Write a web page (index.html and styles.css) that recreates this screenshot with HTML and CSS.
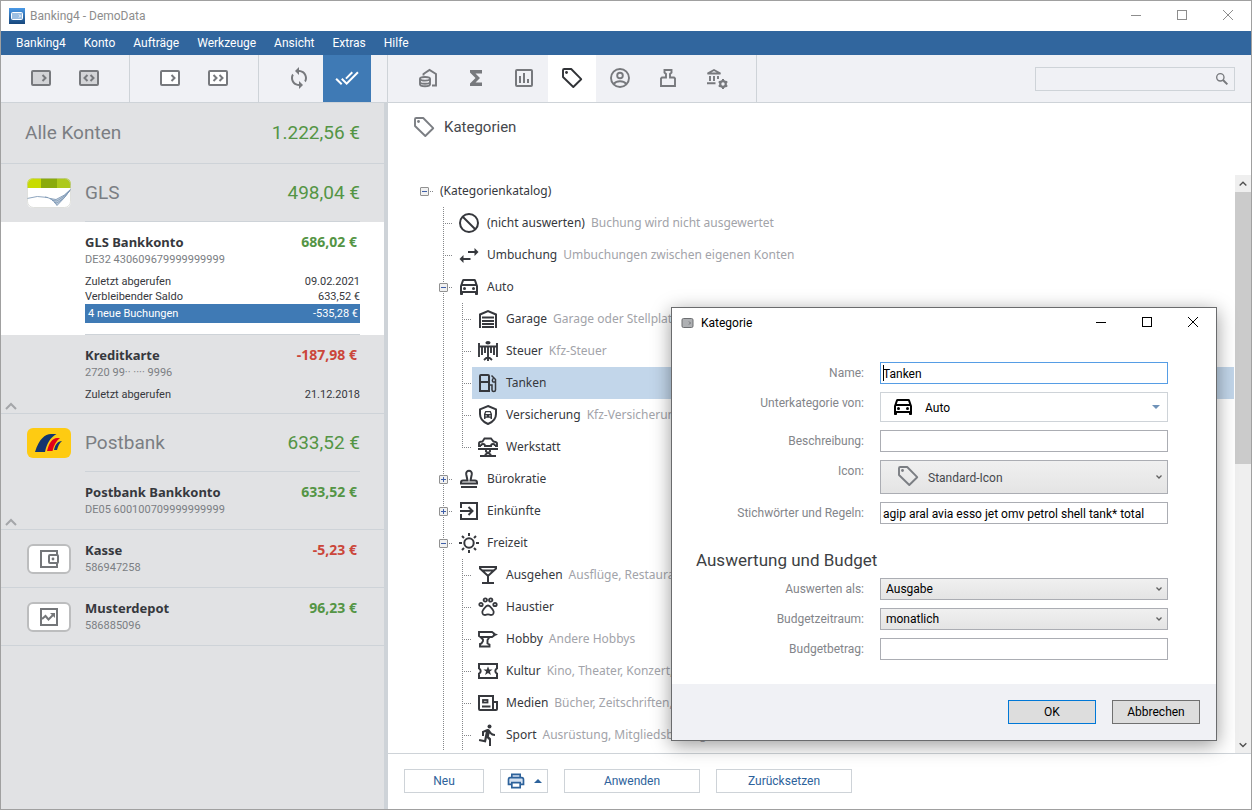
FILE: index.html
```html
<!DOCTYPE html>
<html lang="de">
<head>
<meta charset="utf-8">
<title>Banking4 - DemoData</title>
<link rel="stylesheet" href="styles.css">
</head>
<body>
<svg class="sprite" aria-hidden="true">
  <symbol id="i-card" viewBox="0 0 24 24"><rect x="3" y="5" width="18" height="14" rx="1" fill="#d3d4d7" stroke="currentColor" stroke-width="2"/><path d="M13.500 9l3 3-3 3" fill="none" stroke="currentColor" stroke-width="2"/></symbol>
  <symbol id="i-cards" viewBox="0 0 24 24"><rect x="3" y="5" width="18" height="14" rx="1" fill="#d3d4d7" stroke="currentColor" stroke-width="2"/><path d="M10.500 9l-3 3 3 3M13.500 9l3 3-3 3" fill="none" stroke="currentColor" stroke-width="2"/></symbol>
  <symbol id="i-send" viewBox="0 0 24 24"><rect x="3" y="5" width="18" height="14" rx="1" fill="#fff" stroke="currentColor" stroke-width="2"/><path d="M13.500 9l3 3-3 3" fill="none" stroke="currentColor" stroke-width="2"/></symbol>
  <symbol id="i-sendall" viewBox="0 0 24 24"><rect x="3" y="5" width="18" height="14" rx="1" fill="#fff" stroke="currentColor" stroke-width="2"/><path d="M7.500 9l3 3-3 3M13.500 9l3 3-3 3" fill="none" stroke="currentColor" stroke-width="2"/></symbol>
  <symbol id="i-sync" viewBox="0 0 24 24"><path fill="currentColor" d="M12 4V1L8 5l4 4V6c3.310 0 6 2.690 6 6 0 1.010-.25 1.970-.7 2.800l1.460 1.460A7.930 7.930 0 0 0 20 12c0-4.420-3.580-8-8-8zm0 14c-3.310 0-6-2.690-6-6 0-1.010.25-1.970.7-2.800L5.240 7.740A7.930 7.930 0 0 0 4 12c0 4.420 3.580 8 8 8v3l4-4-4-4v3z"/></symbol>
  <symbol id="i-done" viewBox="0 0 24 24"><path fill="currentColor" d="M18 7l-1.410-1.410-6.340 6.340 1.410 1.410L18 7zm4.240-1.410L11.660 16.170 7.480 12l-1.410 1.410L11.660 19l12-12-1.420-1.410zM.41 13.410L6 19l1.410-1.410L1.830 12 .41 13.410z"/></symbol>
  <symbol id="i-assets" viewBox="0 0 24 24"><g fill="none" stroke="currentColor" stroke-width="1.900"><path d="M7.500 9.500V8L13.500 4l6.500 4v11.500h-4"/><ellipse cx="9" cy="12.800" rx="5" ry="1.800"/><path d="M4 12.800v5.500c0 1.200 2.200 2 5 2s5-.8 5-2v-5.500M4 16c0 1.200 2.200 1.800 5 1.800s5-.6 5-1.800"/></g></symbol>
  <symbol id="i-sum" viewBox="0 0 24 24"><path fill="currentColor" d="M18 4H6v2.500l5.500 5.500L6 17.500V20h12v-3.500h-6.500L16 12l-4.500-4.500H18z"/></symbol>
  <symbol id="i-chart" viewBox="0 0 24 24"><rect x="4" y="4" width="16" height="16" rx="1" fill="none" stroke="currentColor" stroke-width="2"/><path d="M8 17v-7M12 17V7M16 17v-4" stroke="currentColor" stroke-width="2"/></symbol>
  <symbol id="i-tag" viewBox="0 0 24 24"><path d="M3 4.200Q3 3 4.200 3h7L21.200 13.200 13.300 21 3 11z" fill="none" stroke="currentColor" stroke-width="1.900" stroke-linejoin="round"/><circle cx="6.500" cy="6.500" r="1.400" fill="currentColor"/></symbol>
  <symbol id="i-user" viewBox="0 0 24 24"><g fill="none" stroke="currentColor" stroke-width="1.900"><circle cx="12" cy="12" r="9"/><circle cx="12" cy="9.500" r="2.800"/><path d="M5.500 18c2-2.200 4.200-2.800 6.500-2.800s4.500.6 6.500 2.800"/></g></symbol>
  <symbol id="i-weight" viewBox="0 0 24 24"><path d="M10 11.500H6l-1 1V20h14v-7.500l-1-1h-4V8l1.500-1.500V4h-7v2.500L10 8z" fill="none" stroke="currentColor" stroke-width="1.900"/></symbol>
  <symbol id="i-bank" viewBox="0 0 24 24"><g fill="none" stroke="currentColor" stroke-width="1.900"><path d="M3.500 7.500 10 4l6.500 3.500z"/><path d="M6 10v5M10 10v5M14 10v3M3 17.300h8.500"/></g><circle cx="19" cy="18" r="2.800" fill="none" stroke="currentColor" stroke-width="2.200"/><path d="M19 13v2M19 21v2M14.700 15.500l1.700 1M21.600 19.500l1.700 1M14.700 20.500l1.700-1M21.600 16.500l1.700-1" stroke="currentColor" stroke-width="2"/></symbol>
  <symbol id="i-search" viewBox="0 0 24 24"><circle cx="9.500" cy="9.500" r="5.500" fill="none" stroke="currentColor" stroke-width="2"/><path d="M13.500 13.500 20 20" stroke="currentColor" stroke-width="3"/></symbol>
  <symbol id="i-ban" viewBox="0 0 24 24"><circle cx="12" cy="12" r="9" fill="none" stroke="currentColor" stroke-width="2"/><path d="M5.500 5.500l13 13" stroke="currentColor" stroke-width="2"/></symbol>
  <symbol id="i-swap" viewBox="0 0 24 24"><path d="M11 9h8M5 16h8.500" stroke="currentColor" stroke-width="2" fill="none"/><path d="M17.500 5l4 4-4 4zM6.500 12l-4 4 4 4z" fill="currentColor"/></symbol>
  <symbol id="i-car" viewBox="0 0 24 24"><path fill="currentColor" fill-rule="evenodd" d="M18.920 5.010C18.720 4.420 18.160 4 17.500 4h-11c-.66 0-1.210.42-1.420 1.010L3 11v8c0 .55.45 1 1 1h1c.55 0 1-.45 1-1v-1h12v1c0 .55.45 1 1 1h1c.55 0 1-.45 1-1v-8l-2.080-5.990zM6.850 6h10.290l1.080 3.110H5.770L6.850 6zM19 16H5v-5h14v5z"/><circle cx="7.500" cy="13.500" r="1.500" fill="currentColor"/><circle cx="16.500" cy="13.500" r="1.500" fill="currentColor"/></symbol>
  <symbol id="i-garage" viewBox="0 0 24 24"><path d="M4 21V7.500L12 4l8 3.500V21M6 10.500h12M6 14h12M6 17h12M6 20h12" fill="none" stroke="currentColor" stroke-width="2"/></symbol>
  <symbol id="i-tax" viewBox="0 0 24 24"><path d="M3 4v14M21 4v14M6 7v9M18 7v9M9 8v6M15 8v6M2.500 7.500h19M12 7v15M12 17.500l-4 3.500M12 17.500l4 3.500" fill="none" stroke="currentColor" stroke-width="1.900"/><ellipse cx="12" cy="3.800" rx="2.600" ry="1.800" fill="currentColor"/></symbol>
  <symbol id="i-fuel" viewBox="0 0 24 24"><path d="M5 4h7c.6 0 1 .4 1 1v15H4V5c0-.6.400-1 1-1zM4 11h9" fill="none" stroke="currentColor" stroke-width="2"/><path d="M15.500 4.500l4 4V19c0 2-3.500 2-3.500 0v-5h-2.500M19.500 11h-2c-1.500 0-1.500-3.200 0-3.200" fill="none" stroke="currentColor" stroke-width="1.500"/></symbol>
  <symbol id="i-shield" viewBox="0 0 24 24"><path d="M12 3l8 3.300V11c0 4.500-3 8-8 10-5-2-8-5.500-8-10V6.300z" fill="none" stroke="currentColor" stroke-width="2"/><path fill="currentColor" fill-rule="evenodd" d="M9.300 8h5.400l1.300 3v5h-1.500v-1.200h-5V16H8v-5zm.8 1.200-.6 1.800h5l-.6-1.800zm-.6 3v1.200h1.200v-1.200zm3.800 0v1.200h1.200v-1.200z"/></symbol>
  <symbol id="i-lift" viewBox="0 0 24 24"><g fill="none" stroke="currentColor" stroke-width="1.900"><path d="M5 11H3V8.200C3 7 5 6.500 6.500 6.500L8.500 3.500h6.500l2.500 3c1.500.2 3.500.8 3.500 2V11h-2M5 11c0-2.600 4-2.600 4 0h6c0-2.600 4-2.600 4 0M2 14h20M4 21h16"/><path d="M10 15v1.500l4.500 3V21M14 15v1.500l-4.500 3V21"/></g></symbol>
  <symbol id="i-stamp" viewBox="0 0 24 24"><path d="M10.500 13.500 9.200 7.200C8.600 2.500 15.400 2.500 14.800 7.200L13.500 13.500H18c1 0 2 1 2 2v1H4v-1c0-1 1-2 2-2zM4 20h16" fill="none" stroke="currentColor" stroke-width="2"/></symbol>
  <symbol id="i-income" viewBox="0 0 24 24"><path d="M4 9V4h16v16H4v-5M3 12h12M11.500 8l4 4-4 4" fill="none" stroke="currentColor" stroke-width="2"/></symbol>
  <symbol id="i-sun" viewBox="0 0 24 24"><circle cx="12" cy="12" r="4.700" fill="none" stroke="currentColor" stroke-width="2"/><path d="M12 2v3M12 19v3M2 12h3M19 12h3M5 5l2 2M17 17l2 2M5 19l2-2M17 7l2-2" stroke="currentColor" stroke-width="2"/></symbol>
  <symbol id="i-drink" viewBox="0 0 24 24"><path d="M4 4h16v1.500L12 13 4 5.500zM6 7.500h12M12 13v7M6 20h12" fill="none" stroke="currentColor" stroke-width="2"/></symbol>
  <symbol id="i-paw" viewBox="0 0 24 24"><g fill="none" stroke="currentColor" stroke-width="1.800"><circle cx="9.300" cy="5" r="1.700"/><circle cx="14.700" cy="5" r="1.700"/><circle cx="5" cy="9.500" r="1.700"/><circle cx="19" cy="9.500" r="1.700"/><path d="M12 10.500c2 0 3.200 2.500 4.800 4.300 1.500 1.900 1.200 5.200-1.800 5.200-1.200 0-1.800-.6-3-.6s-1.800.6-3 .6c-3 0-3.300-3.300-1.800-5.200C8.800 13 10 10.500 12 10.500z"/></g></symbol>
  <symbol id="i-drill" viewBox="0 0 24 24"><path d="M3 5h13l2 1.500v2L16 10H4.500L3 9zM4.500 10 7 12.500V14l-1.500 2.500L4 17v2.500h9.500V17.500l-2-1V13l2-3" fill="none" stroke="currentColor" stroke-width="1.900"/><path d="M18 6.500h1.500L22 7.500l-2.500 1.200H18z" fill="currentColor"/></symbol>
  <symbol id="i-ticket" viewBox="0 0 24 24"><path d="M3 5h18v4.300a3 3 0 0 0 0 5.400V19H3v-4.300a3 3 0 0 0 0-5.400z" fill="none" stroke="currentColor" stroke-width="2"/><path fill="currentColor" d="M12 7.200l1.200 3.200 3.400.1-2.700 2.100 1 3.300-2.900-1.900-2.900 1.900 1-3.300-2.700-2.100 3.400-.1z"/></symbol>
  <symbol id="i-news" viewBox="0 0 24 24"><path d="M20 19H4c-.6 0-1-.4-1-1V5h14v14M17 11h4v7c0 .6-.4 1-1 1M6 15.500h8.500" fill="none" stroke="currentColor" stroke-width="2"/><rect x="7" y="9" width="4.500" height="2.500" fill="none" stroke="currentColor" stroke-width="1.800"/></symbol>
  <symbol id="i-run" viewBox="0 0 24 24"><circle cx="13.500" cy="3.500" r="2" fill="currentColor"/><path fill="currentColor" d="M9.890 19.380l1-4.380L13 17v6h2v-7.500l-2.110-2 .61-3A7.300 7.300 0 0 0 19 13v-2c-1.910 0-3.500-1-4.310-2.420l-1-1.580c-.4-.62-1-1-1.690-1-.31 0-.5.080-.81.080L6 8.280V13h2V9.580l1.790-.7L8.190 17l-4.900-1-.4 2 7 1.380z"/></symbol>
  <symbol id="i-print" viewBox="0 0 24 24"><path d="M7 8V4h10v4M7 16H3v-5.500C3 9 3.800 8 5 8h14c1.200 0 2 1 2 2.500V16h-4" fill="#d5e1f0" stroke="currentColor" stroke-width="2"/><path d="M7 14h10v6H7z" fill="#fff" stroke="currentColor" stroke-width="2"/></symbol>
  <symbol id="i-wallet" viewBox="0 0 24 24"><path d="M20 8V4H4v16h16v-4" fill="none" stroke="currentColor" stroke-width="2"/><rect x="12" y="8" width="9" height="8" rx="1" fill="none" stroke="currentColor" stroke-width="2"/><circle cx="16" cy="12" r="1.400" fill="currentColor"/></symbol>
  <symbol id="i-depot" viewBox="0 0 24 24"><rect x="4" y="4" width="16" height="16" fill="none" stroke="currentColor" stroke-width="2"/><path d="M5 14l3.500-3 3 3.500 5-5" fill="none" stroke="currentColor" stroke-width="2"/><path d="M13 8h5v5z" fill="currentColor"/></symbol>
  <symbol id="i-min" viewBox="0 0 12 12"><path d="M1 5.500h10" stroke="currentColor"/></symbol>
  <symbol id="i-max" viewBox="0 0 12 12"><rect x="1.500" y=".5" width="9" height="9" fill="none" stroke="currentColor"/></symbol>
  <symbol id="i-close" viewBox="0 0 12 12"><path d="M1 0l10 10M11 0L1 10" stroke="currentColor"/></symbol>
  <symbol id="i-up" viewBox="0 0 12 12"><path d="M1 9l5-5 5 5" fill="none" stroke="currentColor" stroke-width="2"/></symbol>
  <symbol id="i-down" viewBox="0 0 12 12"><path d="M1 4l5 5 5-5" fill="none" stroke="currentColor" stroke-width="2"/></symbol>
  <symbol id="i-chev" viewBox="0 0 8 8"><path d="M1.500 2.500L4 5l2.500-2.500" fill="none" stroke="currentColor" stroke-width="1.300"/></symbol>
  <symbol id="i-tri" viewBox="0 0 8 4"><path d="M0 0h8L4 4z" fill="currentColor"/></symbol>
  <symbol id="i-triup" viewBox="0 0 8 4"><path d="M0 4h8L4 0z" fill="currentColor"/></symbol>
</svg>

<div class="window">
  <header class="titlebar">
    <svg class="app-icon" viewBox="0 0 16 16"><defs><linearGradient id="blue" x2="0" y2="1"><stop stop-color="#4a9ae8"/><stop offset="1" stop-color="#17477c"/></linearGradient></defs><path fill="url(#blue)" d="M0 0h16v16H0z"/><rect x="2.500" y="4.500" width="11" height="7" rx="1" fill="#9cbfe2" stroke="#fff"/><path d="M10 6.500L11.500 8 10 9.500" fill="none" stroke="#fff"/></svg>
    <h1 class="window-title">Banking4 - DemoData</h1>
    <div class="window-buttons">
      <button aria-label="Minimieren"><svg><use href="#i-min"/></svg></button>
      <button aria-label="Maximieren"><svg><use href="#i-max"/></svg></button>
      <button aria-label="Schließen"><svg><use href="#i-close"/></svg></button>
    </div>
  </header>

  <nav class="menubar">
    <button>Banking4</button><button>Konto</button><button>Aufträge</button><button>Werkzeuge</button><button>Ansicht</button><button>Extras</button><button>Hilfe</button>
  </nav>

  <div class="toolbar">
    <div class="tool-group">
      <button aria-label="Konto abrufen"><svg><use href="#i-card"/></svg></button>
      <button aria-label="Umsätze"><svg><use href="#i-cards"/></svg></button>
    </div>
    <div class="tool-group">
      <button aria-label="Auftrag senden"><svg><use href="#i-send"/></svg></button>
      <button aria-label="Alle senden"><svg><use href="#i-sendall"/></svg></button>
    </div>
    <div class="tool-group">
      <button aria-label="Synchronisieren"><svg><use href="#i-sync"/></svg></button>
      <button class="primary" aria-label="Alle gelesen"><svg><use href="#i-done"/></svg></button>
    </div>
    <div class="tool-group">
      <button aria-label="Vermögen"><svg><use href="#i-assets"/></svg></button>
      <button aria-label="Summen"><svg><use href="#i-sum"/></svg></button>
      <button aria-label="Auswertung"><svg><use href="#i-chart"/></svg></button>
      <button class="current" aria-label="Kategorien"><svg><use href="#i-tag"/></svg></button>
      <button aria-label="Adressen"><svg><use href="#i-user"/></svg></button>
      <button aria-label="Gewichte"><svg><use href="#i-weight"/></svg></button>
      <button aria-label="Bankzugänge"><svg><use href="#i-bank"/></svg></button>
    </div>
    <div class="search">
      <input type="search" aria-label="Suchen">
      <svg><use href="#i-search"/></svg>
    </div>
  </div>

  <div class="content">
    <aside class="sidebar">
      <section class="group">
        <div class="group-head total"><h2>Alle Konten</h2><span class="amount pos">1.222,56 €</span></div>
      </section>
      <section class="group">
        <div class="group-head">
          <svg class="logo" viewBox="0 0 44 30"><defs><clipPath id="gls"><rect width="44" height="30" rx="6"/></clipPath></defs><g clip-path="url(#gls)"><path fill="#fff" d="M0 0h44v30H0z"/><path fill="#c8dc00" d="M0 0h14v10H0z"/><path fill="#8aab0c" d="M14 0h16v10H14z"/><path fill="#adc91c" d="M30 0h14v10H30z"/><path d="M0 20.500Q10 17 21 19.500" fill="none" stroke="#8fa6bf"/><path fill="#c5d1de" d="M16 18.500Q25 20 30 27.500 36 22 44 11 36 19 29 21.500 24 21 16 18.500z"/><g fill="none" stroke="#7e98b5" stroke-width=".9"><path d="M18 19q8 1 12 8.500Q36 22 44 11M23 20.500l6 1Q38 18 44 11M25 22.500l5 .5Q38 19 44 11M27 24.500l3 .5Q38 21 44 11"/></g></g><rect x=".5" y=".5" width="43" height="29" rx="6" fill="none" stroke="#c9cbc7" stroke-opacity=".6"/></svg>
          <h2>GLS</h2><span class="amount pos">498,04 €</span>
        </div>
        <article class="account selected">
          <div class="row"><h3>GLS Bankkonto</h3><strong class="pos">686,02 €</strong></div>
          <p class="number">DE32 430609679999999999</p>
          <dl>
            <div><dt>Zuletzt abgerufen</dt><dd>09.02.2021</dd></div>
            <div><dt>Verbleibender Saldo</dt><dd>633,52 €</dd></div>
            <div class="new"><dt>4 neue Buchungen</dt><dd>-535,28 €</dd></div>
          </dl>
        </article>
        <article class="account">
          <div class="row"><h3>Kreditkarte</h3><strong class="neg">-187,98 €</strong></div>
          <p class="number">2720 99·· ···· 9996</p>
          <dl><div><dt>Zuletzt abgerufen</dt><dd>21.12.2018</dd></div></dl>
        </article>
        <button class="collapse" aria-label="Einklappen"><svg><use href="#i-up"/></svg></button>
      </section>
      <section class="group">
        <div class="group-head">
          <svg class="logo" viewBox="0 0 44 30"><rect width="44" height="30" rx="6" fill="#fecb12"/><path fill="#12356f" d="M8 24C12 11 18 6 24 6h5.500C23 10 20 15 18 24z"/><path fill="#e2001a" d="M20 23c2-8 5.500-13 10-13h3c-4 3-6 7-7.500 13z"/><path fill="#12356f" d="M27 22c1-5 3.500-9 8-9-2.500 2-4 5-5 9z"/></svg>
          <h2>Postbank</h2><span class="amount pos">633,52 €</span>
        </div>
        <article class="account">
          <div class="row"><h3>Postbank Bankkonto</h3><strong class="pos">633,52 €</strong></div>
          <p class="number">DE05 600100709999999999</p>
        </article>
        <button class="collapse" aria-label="Einklappen"><svg><use href="#i-up"/></svg></button>
      </section>
      <section class="group">
        <article class="account with-icon">
          <span class="badge"><svg><use href="#i-wallet"/></svg></span>
          <div class="row"><h3>Kasse</h3><strong class="neg">-5,23 €</strong></div>
          <p class="number">586947258</p>
        </article>
      </section>
      <section class="group">
        <article class="account with-icon">
          <span class="badge"><svg><use href="#i-depot"/></svg></span>
          <div class="row"><h3>Musterdepot</h3><strong class="pos">96,23 €</strong></div>
          <p class="number">586885096</p>
        </article>
      </section>
    </aside>

    <main class="main">
      <div class="page-head"><svg class="icon"><use href="#i-tag"/></svg><h2>Kategorien</h2></div>
      <div class="tree-area">
        <ul class="tree">
          <li><i class="g node root"><button class="exp" aria-label="Einklappen"></button></i><div class="item text-only"><b>(Kategorienkatalog)</b></div></li>
          <li><i class="g"></i><i class="g v h"></i><div class="item"><svg class="icon"><use href="#i-ban"/></svg><b>(nicht auswerten)</b><span>Buchung wird nicht ausgewertet</span></div></li>
          <li><i class="g"></i><i class="g v h"></i><div class="item"><svg class="icon"><use href="#i-swap"/></svg><b>Umbuchung</b><span>Umbuchungen zwischen eigenen Konten</span></div></li>
          <li><i class="g"></i><i class="g v h"><button class="exp" aria-label="Einklappen"></button></i><div class="item"><svg class="icon"><use href="#i-car"/></svg><b>Auto</b></div></li>
          <li><i class="g"></i><i class="g v"></i><i class="g v h"></i><div class="item"><svg class="icon"><use href="#i-garage"/></svg><b>Garage</b><span>Garage oder Stellplatz</span></div></li>
          <li><i class="g"></i><i class="g v"></i><i class="g v h"></i><div class="item"><svg class="icon"><use href="#i-tax"/></svg><b>Steuer</b><span>Kfz-Steuer</span></div></li>
          <li><i class="g"></i><i class="g v"></i><i class="g v h"></i><div class="item active"><svg class="icon"><use href="#i-fuel"/></svg><b>Tanken</b></div></li>
          <li><i class="g"></i><i class="g v"></i><i class="g v h"></i><div class="item"><svg class="icon"><use href="#i-shield"/></svg><b>Versicherung</b><span>Kfz-Versicherung</span></div></li>
          <li><i class="g"></i><i class="g v"></i><i class="g v h last"></i><div class="item"><svg class="icon"><use href="#i-lift"/></svg><b>Werkstatt</b></div></li>
          <li><i class="g"></i><i class="g v h"><button class="exp closed" aria-label="Ausklappen"></button></i><div class="item"><svg class="icon"><use href="#i-stamp"/></svg><b>Bürokratie</b></div></li>
          <li><i class="g"></i><i class="g v h"><button class="exp closed" aria-label="Ausklappen"></button></i><div class="item"><svg class="icon"><use href="#i-income"/></svg><b>Einkünfte</b></div></li>
          <li><i class="g"></i><i class="g v h"><button class="exp" aria-label="Einklappen"></button></i><div class="item"><svg class="icon"><use href="#i-sun"/></svg><b>Freizeit</b></div></li>
          <li><i class="g"></i><i class="g v"></i><i class="g v h"></i><div class="item"><svg class="icon"><use href="#i-drink"/></svg><b>Ausgehen</b><span>Ausflüge, Restaurants</span></div></li>
          <li><i class="g"></i><i class="g v"></i><i class="g v h"></i><div class="item"><svg class="icon"><use href="#i-paw"/></svg><b>Haustier</b></div></li>
          <li><i class="g"></i><i class="g v"></i><i class="g v h"></i><div class="item"><svg class="icon"><use href="#i-drill"/></svg><b>Hobby</b><span>Andere Hobbys</span></div></li>
          <li><i class="g"></i><i class="g v"></i><i class="g v h"></i><div class="item"><svg class="icon"><use href="#i-ticket"/></svg><b>Kultur</b><span>Kino, Theater, Konzert, </span></div></li>
          <li><i class="g"></i><i class="g v"></i><i class="g v h"></i><div class="item"><svg class="icon"><use href="#i-news"/></svg><b>Medien</b><span>Bücher, Zeitschriften, </span></div></li>
          <li><i class="g"></i><i class="g v"></i><i class="g v h"></i><div class="item"><svg class="icon"><use href="#i-run"/></svg><b>Sport</b><span>Ausrüstung, Mitgliedsbeiträge</span></div></li>
        </ul>
        <div class="scrollbar">
          <svg><use href="#i-up"/></svg>
          <div class="track"><div class="thumb"></div></div>
          <svg><use href="#i-down"/></svg>
        </div>
      </div>
      <footer class="actions">
        <button class="narrow">Neu</button>
        <button class="print" aria-label="Drucken"><svg class="printer"><use href="#i-print"/></svg><svg class="tri"><use href="#i-triup"/></svg></button>
        <button>Anwenden</button>
        <button>Zurücksetzen</button>
      </footer>
    </main>
  </div>

  <form class="dialog" role="dialog" aria-labelledby="dialog-title">
    <header class="titlebar">
      <svg class="dialog-icon" viewBox="0 0 12 10"><rect x=".5" y=".5" width="11" height="9" rx="1.500" fill="#aeb0b3" stroke="#6c6e71"/><path d="M7.500 3.500L9 5 7.500 6.500" fill="none" stroke="#6c6e71"/></svg>
      <h2 class="window-title" id="dialog-title">Kategorie</h2>
      <div class="window-buttons">
        <button type="button" aria-label="Minimieren"><svg><use href="#i-min"/></svg></button>
        <button type="button" aria-label="Maximieren"><svg><use href="#i-max"/></svg></button>
        <button type="button" aria-label="Schließen"><svg><use href="#i-close"/></svg></button>
      </div>
    </header>
    <div class="fields">
      <label for="name">Name:</label>
      <div class="field focus"><input id="name" type="text" value="Tanken"><span class="caret"></span></div>
      <label for="parent">Unterkategorie von:</label>
      <div class="field parent"><select id="parent"><option>Auto</option></select><svg class="lead"><use href="#i-car"/></svg><svg class="arrow tri"><use href="#i-tri"/></svg></div>
      <label for="desc">Beschreibung:</label>
      <div class="field"><input id="desc" type="text"></div>
      <label for="icon">Icon:</label>
      <div class="field icon-select"><select id="icon"><option>Standard-Icon</option></select><svg class="lead"><use href="#i-tag"/></svg><svg class="arrow"><use href="#i-chev"/></svg></div>
      <label for="rules">Stichwörter und Regeln:</label>
      <div class="field"><input id="rules" type="text" value="agip aral avia esso jet omv petrol shell tank* total"></div>
      <h3>Auswertung und Budget</h3>
      <label for="kind">Auswerten als:</label>
      <div class="field"><select id="kind"><option>Ausgabe</option></select><svg class="arrow"><use href="#i-chev"/></svg></div>
      <label for="period">Budgetzeitraum:</label>
      <div class="field"><select id="period"><option>monatlich</option></select><svg class="arrow"><use href="#i-chev"/></svg></div>
      <label for="sum">Budgetbetrag:</label>
      <div class="field"><input id="sum" type="text"></div>
    </div>
    <footer class="dialog-actions"><button type="button" class="default">OK</button><button type="button">Abbrechen</button></footer>
  </form>
</div>
</body>
</html>
```
FILE: styles.css
```css
:root {
  --ui: Roboto, "Open Sans", sans-serif;
  --wide: "Noto Sans", "Open Sans", sans-serif;
  --text: #36383d;
  --muted: #7b7e83;
  --line: #ced3d8;
  --bar: #f0f1f5;
  --blue: #31669e;
  --accent: #3f7ab5;
  --green: #549545;
  --red: #cb463a;
}

* { box-sizing: border-box; margin: 0; padding: 0; }
body { font: 12px/16px var(--ui); color: var(--text); background: #fff; }
button, input, select { font: inherit; color: inherit; border: 0; background: none; border-radius: 0; outline: 0; }
ul { list-style: none; }
.sprite { position: absolute; width: 0; height: 0; }

.window { position: relative; display: flex; flex-direction: column; height: 100vh; border: 1px solid #a0a0a0; overflow: hidden; }

.titlebar { display: flex; align-items: center; height: 30px; flex: none; padding-left: 8px; background: #fff; color: #8d8d8d; }
.app-icon { width: 16px; height: 16px; margin-right: 5px; }
.window-title { font-size: 12px; font-weight: 400; }
.window-buttons { display: flex; margin-left: auto; height: 100%; }
.window-buttons button { width: 46px; display: grid; place-items: center; }
.window-buttons svg { width: 12px; height: 12px; }

.menubar { display: flex; height: 24px; flex: none; padding-left: 6px; background: var(--blue); color: #fff; }
.menubar button { padding: 0 9px; }

.toolbar { display: flex; height: 48px; flex: none; background: var(--bar); border-bottom: 1px solid var(--line); color: #77797d; }
.tool-group { display: flex; padding: 0 16px; border-right: 1px solid var(--line); }
.tool-group button { width: 48px; padding-bottom: 1px; display: grid; place-items: center; }
.tool-group svg { width: 24px; height: 24px; }
.tool-group .primary { background: var(--accent); color: #fff; }
.tool-group .current { background: #fff; color: #303236; }
.search { display: flex; align-items: center; align-self: center; width: 200px; height: 24px; margin: 0 16px 0 auto; border: 1px solid var(--line); padding: 0 4px; }
.search input { flex: 1; min-width: 0; appearance: none; }
.search svg { width: 16px; height: 16px; flex: none; }

.content { display: flex; flex: 1; min-height: 0; }

.sidebar { width: 387px; flex: none; background: #e1e2e4; border-right: 4px solid var(--line); }
.group { position: relative; border-bottom: 1px solid var(--line); }
.group-head { position: relative; display: flex; align-items: center; height: 58px; padding: 0 24px 0 26px; }
.group-head:not(.total)::after { content: ""; position: absolute; left: 84px; right: 24px; bottom: 0; border-bottom: 1px solid var(--line); }
.group-head h2, .group-head .amount { font-size: 19px; line-height: 24px; font-weight: 400; }
.group-head h2 { color: var(--muted); }
.group-head .amount { margin-left: auto; }
.total { height: 60px; padding-left: 24px; }
.logo { width: 44px; height: 30px; margin-right: 14px; }
.pos { color: var(--green); }
.neg { color: var(--red); }
.account { position: relative; padding: 12px 24px 11px 84px; }
.account.selected { background: #fff; padding-bottom: 12px; }
.account.selected::after { content: ""; position: absolute; left: 84px; right: 24px; bottom: 0; border-bottom: 1px solid var(--line); }
.row { display: flex; justify-content: space-between; padding-right: 3px; line-height: 16px; font-family: var(--wide); }
.row h3 { font-size: 13px; }
.row strong { font-size: 14px; }
.number { margin-top: 2px; font-size: 11px; line-height: 16px; color: var(--muted); }
.account dl { margin-top: 6px; font-size: 11px; line-height: 15px; }
.account dl div { display: flex; justify-content: space-between; }
.account dl .new { background: var(--accent); color: #fff; line-height: 19px; padding: 0 2px 0 3px; }
.collapse { position: absolute; left: 4px; bottom: 1px; width: 12px; height: 12px; color: #a4a6a9; }
.collapse svg { display: block; width: 12px; height: 12px; }
.with-icon .badge { position: absolute; left: 26px; top: 14px; width: 44px; height: 30px; display: grid; place-items: center; background: #fff; border: 2px solid #bcbdbe; border-radius: 6px; color: #747679; }
.badge svg { width: 24px; height: 24px; }

.main { display: flex; flex-direction: column; flex: 1; min-width: 0; }
.page-head { display: flex; align-items: center; height: 48px; margin-bottom: 24px; padding-left: 24px; color: var(--muted); }
.page-head h2 { margin-left: 8px; font-size: 15px; font-weight: 400; line-height: 20px; color: #46484d; }
.icon { width: 24px; height: 24px; flex: none; }

.tree-area { display: flex; flex: 1; min-height: 0; }
.tree { flex: 1; min-width: 0; overflow: hidden; padding-left: 27px; font-family: var(--wide); }
.tree li { display: flex; height: 32px; }
.g { position: relative; width: 19px; flex: none; }
.g.v::before { content: ""; position: absolute; left: 9px; top: 0; bottom: 0; width: 1px; background: repeating-linear-gradient(#85878a 0 1px, transparent 1px 2px); }
.g.last::before { bottom: 15px; }
.g.h::after, .g.root::after { content: ""; position: absolute; left: 9px; right: 0; top: 16px; height: 1px; background: repeating-linear-gradient(90deg, #85878a 0 1px, transparent 1px 2px); }
.exp { position: absolute; z-index: 1; left: 5px; top: 12px; width: 9px; height: 9px; border: 1px solid #919191; border-radius: 1px; background: linear-gradient(#3f5fa8, #3f5fa8) center / 5px 1px no-repeat, #f1f1f1; }
.exp.closed { background: linear-gradient(#3f5fa8, #3f5fa8) center / 5px 1px no-repeat, linear-gradient(#3f5fa8, #3f5fa8) center / 1px 5px no-repeat, #f1f1f1; }
.item { display: flex; align-items: center; flex: 1; min-width: 0; padding-left: 4px; margin-right: 1px; white-space: nowrap; overflow: hidden; }
.item.text-only { padding-left: 0; }
.item b { margin-left: 6px; font-weight: 400; }
.item span { margin-left: 6px; color: #a2a3a9; }
.item.active { background: #c2d6ea; }
.scrollbar { display: flex; flex-direction: column; align-items: center; width: 16px; background: #efefef; color: #505050; }
.scrollbar svg { width: 8px; height: 17px; flex: none; }
.track { flex: 1; width: 100%; }
.thumb { height: 50%; background: #cbcbcb; }

.actions { display: flex; gap: 16px; flex: none; height: 56px; padding: 15px 16px; border-top: 1px solid var(--line); color: #2d629b; }
.actions button { width: 136px; height: 24px; border: 1px solid var(--line); background: #fff; }
.actions .narrow { width: 80px; }
.actions .print { width: 48px; display: flex; align-items: center; justify-content: center; gap: 8px; }
.printer { width: 20px; height: 20px; }
.actions .tri { width: 8px; height: 4px; }

.dialog { position: absolute; left: 670px; top: 306px; width: 546px; background: #fff; border: 1px solid #6a6b6d; box-shadow: 0 4px 18px rgba(0, 0, 0, .4); color: #000; }
.dialog .titlebar { color: #000; }
.dialog-icon { width: 13px; height: 10px; margin: 0 7px 0 1px; }
.fields { display: grid; grid-template-columns: 168px 1fr; gap: 8px 16px; padding: 24px 48px 24px 24px; }
.fields label { line-height: 22px; text-align: right; color: #83858a; }
.fields h3 { grid-column: 1 / -1; padding-top: 18px; font-size: 17px; line-height: 20px; font-weight: 400; color: #3d3f44; }
.field { position: relative; height: 22px; }
.field input, .field select { display: block; width: 100%; height: 100%; border: 1px solid #abadb3; background: #fff; padding: 2px 2px 0; appearance: none; }
.field select { padding: 0 5px; background: linear-gradient(#f0f0f0, #e4e4e4); }
.field.focus input { border-color: #569de5; }
.caret { position: absolute; left: 3px; top: 3px; width: 1px; height: 16px; background: #000; }
.field.parent { height: 30px; }
.field.parent select { padding: 2px 5px 0 44px; background: #fff; border-color: var(--line); }
.field.icon-select { height: 34px; }
.field.icon-select select { padding: 2px 5px 0 47px; color: #46484d; }
.lead { position: absolute; left: 11px; top: 3px; width: 24px; height: 24px; pointer-events: none; }
.icon-select .lead { left: 16px; top: 4px; color: var(--muted); }
.arrow { position: absolute; right: 5px; top: 50%; width: 8px; height: 8px; margin-top: -4px; color: #606060; pointer-events: none; }
.arrow.tri { right: 8px; height: 4px; margin-top: -2px; color: #6f92b8; }
.dialog-actions { display: flex; justify-content: flex-end; gap: 16px; padding: 16px; background: var(--bar); }
.dialog-actions button { width: 88px; height: 24px; background: #ddd; border: 1px solid #707070; }
.dialog-actions .default { border-color: #0078d7; }
```
